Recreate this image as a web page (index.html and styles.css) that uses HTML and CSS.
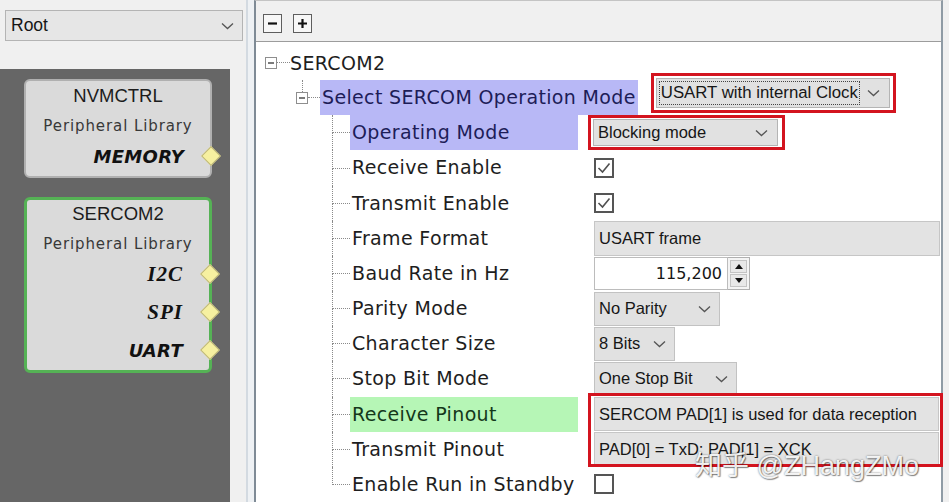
FILE: index.html
```html
<!DOCTYPE html>
<html>
<head>
<meta charset="utf-8" />
<title>SERCOM2 配置</title>
<link rel="stylesheet" href="styles.css">
</head>
<body>
<div class="app">
  <div class="side">
    <div class="side_top">
      <div class="combo root_combo"><span>Root</span><svg class="chev" width="13" height="8" viewBox="0 0 13 8"><path d="M1 1.5 L6.5 6.5 L12 1.5" /></svg></div>
    </div>
    <div class="side_body">
      <div class="canvas">
        <div class="card">
          <div class="card_title">NVMCTRL</div>
          <div class="card_sub">Peripheral Library</div>
          <div class="port"><span class="port_name">MEMORY</span><i class="pin"></i></div>
        </div>
        <div class="card card_on">
          <div class="card_title">SERCOM2</div>
          <div class="card_sub">Peripheral Library</div>
          <div class="port"><span class="port_name serif">I2C</span><i class="pin"></i></div>
          <div class="port"><span class="port_name serif">SPI</span><i class="pin"></i></div>
          <div class="port"><span class="port_name">UART</span><i class="pin"></i></div>
        </div>
      </div>
      <div class="gap_strip"></div>
    </div>
  </div>
  <div class="splitter"></div>
  <div class="panel">
    <div class="toolbar">
      <span class="tb_btn"><svg width="11" height="11" viewBox="0 0 11 11"><path d="M1 5.5 H10" /></svg></span>
      <span class="tb_btn"><svg width="11" height="11" viewBox="0 0 11 11"><path d="M1 5.5 H10 M5.5 1 V10" /></svg></span>
    </div>
    <div class="tree">
      <div class="row">
        <span class="exp"><svg width="12" height="12" viewBox="0 0 12 12"><rect x="0.5" y="0.5" width="11" height="11" /><path d="M3 6 H9" /></svg></span>
        <span class="stub"></span>
        <span class="label">SERCOM2</span>
      </div>
      <div class="row mode_row">
        <span class="exp_col"><span class="exp"><svg width="12" height="12" viewBox="0 0 12 12"><rect x="0.5" y="0.5" width="11" height="11" /><path d="M3 6 H9" /></svg></span></span>
        <span class="stub stub_s"></span>
        <span class="label hl_blue mode_label">Select SERCOM Operation Mode</span>
        <span class="mark mark_usart"><span class="combo w_usart"><span class="focus">USART with internal Clock</span><svg class="chev" width="13" height="8" viewBox="0 0 13 8"><path d="M1 1.5 L6.5 6.5 L12 1.5" /></svg></span></span>
      </div>
      <div class="leaves">
        <div class="row">
          <span class="twig"></span><span class="label leaf_label hl_blue">Operating Mode</span>
          <span class="value"><span class="mark mark_block"><span class="combo w_block"><span>Blocking mode</span><svg class="chev" width="13" height="8" viewBox="0 0 13 8"><path d="M1 1.5 L6.5 6.5 L12 1.5" /></svg></span></span></span>
        </div>
        <div class="row">
          <span class="twig"></span><span class="label leaf_label">Receive Enable</span>
          <span class="value"><span class="check"><svg width="16" height="16" viewBox="0 0 16 16"><path d="M2.5 8 L6.5 12 L13.5 3.5" /></svg></span></span>
        </div>
        <div class="row">
          <span class="twig"></span><span class="label leaf_label">Transmit Enable</span>
          <span class="value"><span class="check"><svg width="16" height="16" viewBox="0 0 16 16"><path d="M2.5 8 L6.5 12 L13.5 3.5" /></svg></span></span>
        </div>
        <div class="row">
          <span class="twig"></span><span class="label leaf_label">Frame Format</span>
          <span class="value"><span class="field w_wide">USART frame</span></span>
        </div>
        <div class="row">
          <span class="twig"></span><span class="label leaf_label">Baud Rate in Hz</span>
          <span class="value"><span class="spin"><span class="spin_input">115,200</span><span class="spin_btns"><span class="spin_btn"><svg width="8" height="5" viewBox="0 0 8 5"><path d="M0 5 L4 0 L8 5 Z" /></svg></span><span class="spin_btn"><svg width="8" height="5" viewBox="0 0 8 5"><path d="M0 0 L4 5 L8 0 Z" /></svg></span></span></span></span>
        </div>
        <div class="row">
          <span class="twig"></span><span class="label leaf_label">Parity Mode</span>
          <span class="value"><span class="combo leaf_combo w_parity"><span>No Parity</span><svg class="chev" width="13" height="8" viewBox="0 0 13 8"><path d="M1 1.5 L6.5 6.5 L12 1.5" /></svg></span></span>
        </div>
        <div class="row">
          <span class="twig"></span><span class="label leaf_label">Character Size</span>
          <span class="value"><span class="combo leaf_combo w_bits"><span>8 Bits</span><svg class="chev" width="13" height="8" viewBox="0 0 13 8"><path d="M1 1.5 L6.5 6.5 L12 1.5" /></svg></span></span>
        </div>
        <div class="row">
          <span class="twig"></span><span class="label leaf_label">Stop Bit Mode</span>
          <span class="value"><span class="combo leaf_combo w_stop"><span>One Stop Bit</span><svg class="chev" width="13" height="8" viewBox="0 0 13 8"><path d="M1 1.5 L6.5 6.5 L12 1.5" /></svg></span></span>
        </div>
        <div class="pin_group">
          <div class="row">
            <span class="twig"></span><span class="label leaf_label hl_green">Receive Pinout</span>
            <span class="value"><span class="field w_pin">SERCOM PAD[1] is used for data reception</span></span>
          </div>
          <div class="row">
            <span class="twig"></span><span class="label leaf_label">Transmit Pinout</span>
            <span class="value"><span class="field w_pin">PAD[0] = TxD; PAD[1] = XCK</span></span>
          </div>
          <div class="mark_pin"></div>
        </div>
        <div class="row last">
          <span class="twig"></span><span class="label leaf_label">Enable Run in Standby</span>
          <span class="value"><span class="check"></span></span>
        </div>
      </div>
    </div>
  </div>
  <div class="watermark">知乎 @ZHangZMo</div>
</div>
</body>
</html>
```

FILE: styles.css
```css
* {
	margin: 0;
	padding: 0;
	box-sizing: border-box;
}
body {
	width: 949px;
	height: 502px;
	overflow: hidden;
	background: #f0f0f0;
	font-family: "DejaVu Sans", sans-serif;
}
.app {
	position: relative;
	display: flex;
	height: 502px;
}

/* left side: project graph */
.side {
	width: 246px;
	display: flex;
	flex-direction: column;
}
.side_top {
	height: 69px;
	padding: 10px 3px 0 5px;
}
.combo {
	display: flex;
	align-items: center;
	justify-content: space-between;
	background: #e1e1e1;
	border: 1px solid #b4b4b4;
	font-family: "Liberation Sans", Arial, sans-serif;
	font-size: 16.5px;
	color: #161616;
	white-space: nowrap;
}
.chev path {
	fill: none;
	stroke: #555;
	stroke-width: 1.3;
}
.root_combo {
	width: 238px;
	height: 31px;
	padding: 0 8px 0 5px;
	font-size: 17.5px;
	background: #e6e6e6;
}
.side_body {
	flex: 1;
	display: flex;
}
.canvas {
	width: 230px;
	background: #666666;
	padding: 10px 0 0 24px;
	display: flex;
	flex-direction: column;
	gap: 19px;
}
.gap_strip {
	flex: 1;
	background: #f0f0f0;
}
.card {
	width: 188px;
	background: #dadada;
	border: 2px solid #b0b0b0;
	border-radius: 6px;
	padding: 4px 0 1px 0;
}
.card_on {
	border: 3px solid #55b255;
	padding: 3px 0 1px 0;
}
.card_title {
	text-align: center;
	font-family: "Liberation Sans", Arial, sans-serif;
	font-size: 18.5px;
	line-height: 22px;
	color: #1c1c1c;
}
.card_sub {
	margin-top: 8px;
	text-align: center;
	font-size: 15px;
	letter-spacing: 0.9px;
	line-height: 22px;
	color: #383838;
}
.port {
	height: 38px;
	display: flex;
	align-items: center;
	justify-content: flex-end;
}
.port_name {
	font-size: 18px;
	font-weight: bold;
	font-style: italic;
	color: #111;
	letter-spacing: 0.3px;
}
.port_name.serif {
	font-family: "Liberation Serif", "Times New Roman", serif;
	font-size: 21px;
	letter-spacing: 1px;
}
.pin {
	width: 14px;
	height: 14px;
	margin: 0 -8px 0 20px;
	background: #f6f0a0;
	border: 1px solid #bdb67a;
	transform: rotate(45deg);
}

/* splitter */
.splitter {
	width: 8px;
	background: #eef1f4;
	border-left: 2px solid #d3dae1;
}

/* right side: configuration tree */
.panel {
	flex: 1;
	margin-right: 6px;
	background: #fff;
	border-left: 2px solid #7f8b96;
	border-right: 2px solid #8f9ba5;
	border-top: 1px solid #c4c4c4;
	display: flex;
	flex-direction: column;
}
.toolbar {
	height: 41px;
	background: #f0f0f0;
	border-bottom: 1px solid #9c9c9c;
	padding: 13px 0 0 7px;
	display: flex;
	gap: 11px;
	align-items: flex-start;
}
.tb_btn {
	width: 19px;
	height: 19px;
	border: 1px solid #5e5e5e;
	background: #f7f7f7;
	display: flex;
	align-items: center;
	justify-content: center;
}
.tb_btn path {
	stroke: #111;
	stroke-width: 2.2;
}
.tree {
	flex: 1;
	padding: 3px 0 0 9px;
}
.row {
	height: 35.17px;
	display: flex;
	align-items: center;
}
.exp rect {
	fill: #fff;
	stroke: #8e8e8e;
}
.exp path {
	stroke: #222;
	stroke-width: 1.2;
}
.exp {
	display: flex;
	width: 12px;
	height: 12px;
}
.stub {
	width: 13px;
	border-top: 1px dotted #8a8a8a;
}
.stub_s {
	width: 12px;
}
.label {
	font-size: 19px;
	letter-spacing: 0.35px;
	color: #1e1e1e;
	white-space: nowrap;
}
.mode_row {
	margin-left: 31px;
}
.exp_col {
	align-self: stretch;
	width: 12px;
	display: flex;
	flex-direction: column;
}
.exp_col:before {
	content: "";
	flex: 1;
	width: 6px;
	border-right: 1px dotted #8a8a8a;
}
.exp_col:after {
	content: "";
	flex: 1;
}
.mode_label {
	align-self: stretch;
	line-height: 35.17px;
	padding: 0 2px;
}
.hl_blue {
	background: #b8b8f6;
	color: #1d1d58;
}
.hl_green {
	background: #b6f6b6;
	color: #14381a;
}
.mark {
	display: flex;
	border: 3px solid #d3141f;
}
.mark_usart {
	margin: -9px 0 0 13px;
	padding: 2px 3px 2px 2px;
}
.w_usart {
	width: 234px;
	height: 30px;
	padding: 0 9px 0 2px;
	font-size: 16.8px;
}
.focus {
	border: 1px dotted #444;
	padding: 1px 1px;
}
.leaves {
	margin-left: 67px;
}
.twig {
	align-self: stretch;
	width: 18px;
	display: flex;
	flex-direction: column;
}
.twig:before {
	content: "";
	flex: 1;
	border-left: 1px dotted #8a8a8a;
	border-bottom: 1px dotted #8a8a8a;
}
.twig:after {
	content: "";
	flex: 1;
	border-left: 1px dotted #8a8a8a;
}
.last .twig:after {
	border-left-color: transparent;
}
.leaf_label {
	width: 228px;
	align-self: stretch;
	line-height: 35.17px;
	padding-left: 2px;
}
.value {
	margin-left: 16px;
	display: flex;
	align-items: center;
}
.mark_block {
	margin-left: -6px;
	padding: 1px 4px 1px 2px;
}
.w_block {
	width: 185px;
	height: 27px;
	padding: 0 9px 0 4px;
}
.leaf_combo {
	height: 34px;
	padding: 0 8px 0 4px;
	border-color: #c2c2c2;
}
.w_parity {
	width: 126px;
}
.w_bits {
	width: 81px;
}
.w_stop {
	width: 143px;
}
.check {
	width: 20px;
	height: 20px;
	border: 2px solid #555;
	background: #fff;
	display: flex;
	align-items: center;
	justify-content: center;
}
.check path {
	fill: none;
	stroke: #505050;
	stroke-width: 1.6;
}
.field {
	height: 35px;
	display: flex;
	align-items: center;
	padding-left: 4px;
	background: #e3e3e3;
	border: 1px solid #c6c6c6;
	font-family: "Liberation Sans", Arial, sans-serif;
	font-size: 16.5px;
	color: #161616;
	white-space: nowrap;
}
.w_wide {
	width: 346px;
}
.w_pin {
	width: 345px;
	height: 34px;
}
.spin {
	display: flex;
	height: 33px;
}
.spin_input {
	width: 134px;
	background: #fff;
	border: 1px solid #bcbcbc;
	display: flex;
	align-items: center;
	justify-content: flex-end;
	padding-right: 5px;
	font-size: 16px;
	color: #161616;
}
.spin_btns {
	width: 22px;
	display: flex;
	flex-direction: column;
	border: 1px solid #b0b0b0;
	border-left: none;
	padding: 2px;
	gap: 1px;
	background: #f4f4f4;
}
.spin_btn {
	flex: 1;
	display: flex;
	align-items: center;
	justify-content: center;
	background: #e8e8e8;
	border: 1px solid #c4c4c4;
}
.spin_btn path {
	fill: #111;
}
.pin_group {
	position: relative;
}
.mark_pin {
	position: absolute;
	left: 256px;
	top: -4px;
	width: 355px;
	height: 74px;
	border: 3px solid #d3141f;
}
.watermark {
	position: absolute;
	left: 695px;
	top: 444px;
	font-family: "Liberation Sans", "Noto Sans CJK SC", sans-serif;
	font-size: 27px;
	color: rgba(255, 255, 255, 0.93);
	text-shadow: 0 0 2px rgba(0, 0, 0, 0.55), 1px 1px 1px rgba(0, 0, 0, 0.4);
	white-space: nowrap;
}
```
